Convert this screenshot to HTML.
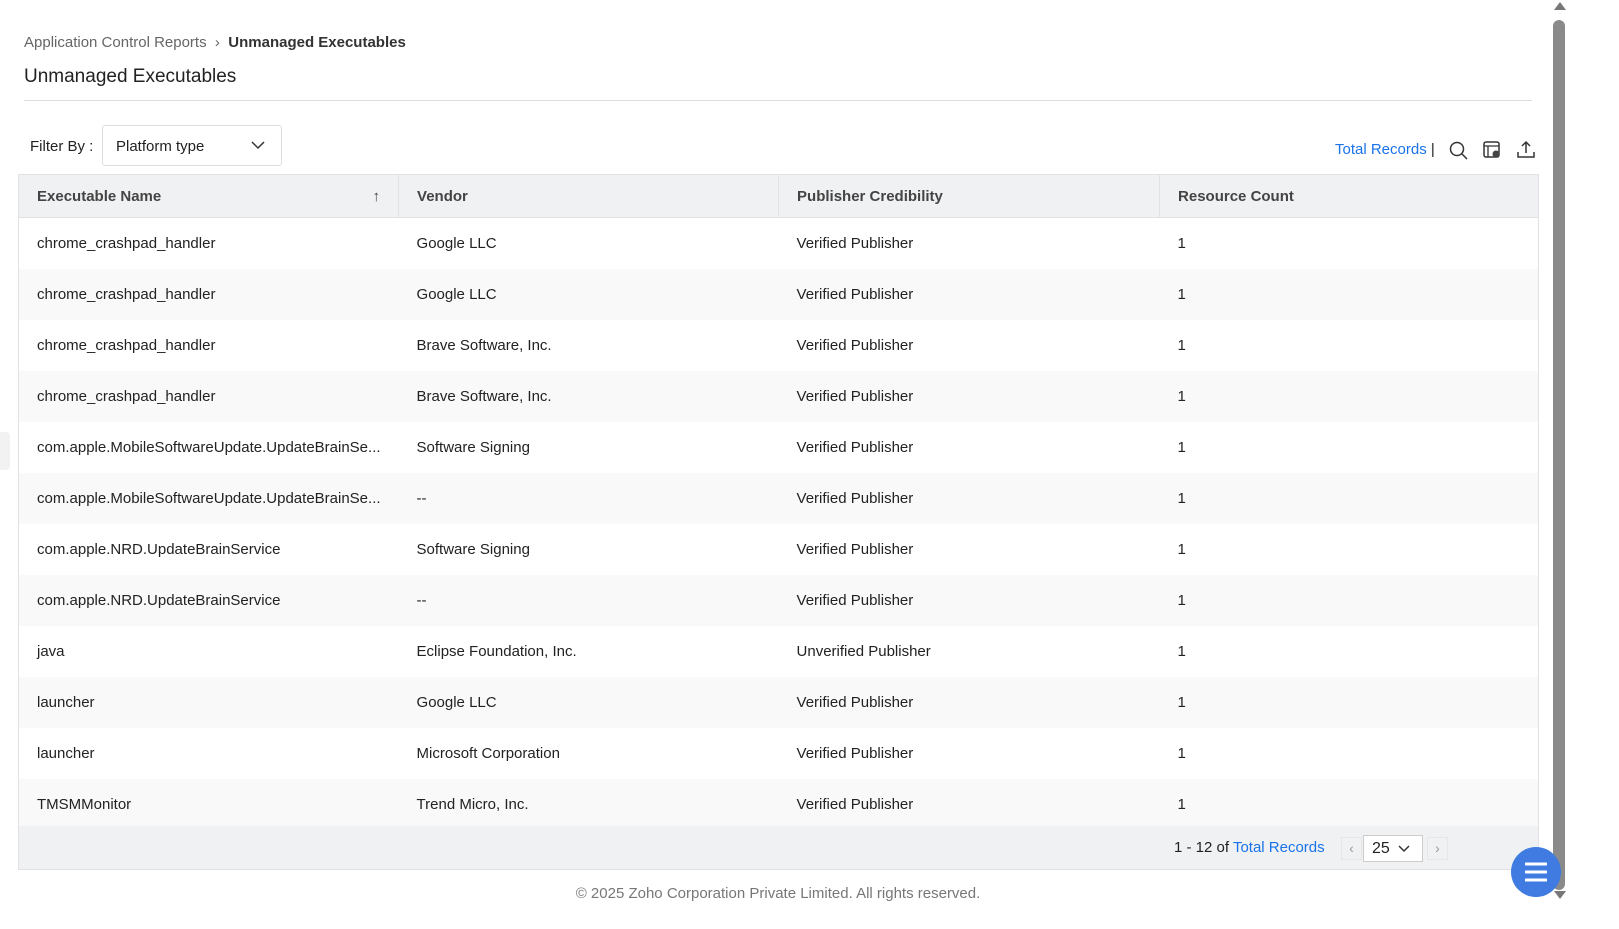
<!DOCTYPE html><html><head><style>
body{margin:0;width:1619px;height:929px;overflow:hidden;background:#fff;font-family:"Liberation Sans",sans-serif;color:#222;position:relative}
.a{position:absolute}
.bc{left:24px;top:34px;font-size:15px;color:#666}
.bc b{color:#333}
h1{position:absolute;left:24px;top:66px;margin:0;font-size:19px;font-weight:normal;color:#222}
.hr{left:24px;top:100px;width:1508px;border-top:1px solid #ddd}
table{position:absolute;left:18px;top:174px;width:1521px;border-collapse:collapse;font-size:15px;border:1px solid #e2e2e6}
th{background:#f0f1f3;height:42px;text-align:left;padding:0 18px;font-weight:bold;color:#444;border-right:1px solid #e2e2e6;border-bottom:1px solid #e2e2e6}
td{height:51px;padding:0 18px;color:#222}
tr:nth-child(odd) td{background:#f9f9fa}
.ft{left:18px;top:826px;width:1519px;height:43px;background:#f0f1f3;border:1px solid #e2e2e6;border-top:none}
</style></head><body>
<div class="a bc">Application Control Reports &nbsp;›&nbsp; <b>Unmanaged Executables</b></div>
<h1>Unmanaged Executables</h1>
<div class="a hr"></div>
<div class="a" style="left:30px;top:138px;font-size:15px">Filter By :</div>
<div class="a" style="left:102px;top:125px;width:180px;height:41px;border:1px solid #ddd;border-radius:3px;box-sizing:border-box;font-size:15px;padding:12px 13px">Platform type<svg class="a" style="left:148px;top:15px" width="14" height="9"><path d="M1 1l6 6 6-6" stroke="#333" fill="none" stroke-width="1.5"/></svg></div>
<div class="a" style="left:1335px;top:141px;font-size:15px;color:#1a73e8">Total Records <span style="color:#222">|</span></div>
<svg class="a" style="left:1449px;top:141px" width="20" height="20"><circle cx="8" cy="8" r="6.5" stroke="#333" fill="none" stroke-width="1.5"/><path d="M13 13l5 5" stroke="#333" stroke-width="1.5"/></svg>
<svg class="a" style="left:1483px;top:141px" width="20" height="18"><rect x="1" y="1" width="15" height="15" rx="2" stroke="#333" fill="none" stroke-width="1.5"/><path d="M1 5h15M5 5v11" stroke="#333" stroke-width="1.3"/><circle cx="13" cy="13" r="3.5" fill="#444"/></svg>
<svg class="a" style="left:1517px;top:140px" width="18" height="19"><path d="M9 13V2M5 6l4-4 4 4M1 12v5h16v-5" stroke="#333" fill="none" stroke-width="1.5"/></svg>
<table>
<tr><th style="width:343px">Executable Name<span style="float:right;font-weight:normal">↑</span></th><th style="width:343px">Vendor</th><th style="width:344px">Publisher Credibility</th><th style="border-right:none">Resource Count</th></tr>
<tr><td>chrome_crashpad_handler</td><td>Google LLC</td><td>Verified Publisher</td><td>1</td></tr>
<tr><td>chrome_crashpad_handler</td><td>Google LLC</td><td>Verified Publisher</td><td>1</td></tr>
<tr><td>chrome_crashpad_handler</td><td>Brave Software, Inc.</td><td>Verified Publisher</td><td>1</td></tr>
<tr><td>chrome_crashpad_handler</td><td>Brave Software, Inc.</td><td>Verified Publisher</td><td>1</td></tr>
<tr><td>com.apple.MobileSoftwareUpdate.UpdateBrainSe...</td><td>Software Signing</td><td>Verified Publisher</td><td>1</td></tr>
<tr><td>com.apple.MobileSoftwareUpdate.UpdateBrainSe...</td><td>--</td><td>Verified Publisher</td><td>1</td></tr>
<tr><td>com.apple.NRD.UpdateBrainService</td><td>Software Signing</td><td>Verified Publisher</td><td>1</td></tr>
<tr><td>com.apple.NRD.UpdateBrainService</td><td>--</td><td>Verified Publisher</td><td>1</td></tr>
<tr><td>java</td><td>Eclipse Foundation, Inc.</td><td>Unverified Publisher</td><td>1</td></tr>
<tr><td>launcher</td><td>Google LLC</td><td>Verified Publisher</td><td>1</td></tr>
<tr><td>launcher</td><td>Microsoft Corporation</td><td>Verified Publisher</td><td>1</td></tr>
<tr><td>TMSMMonitor</td><td>Trend Micro, Inc.</td><td>Verified Publisher</td><td>1</td></tr>
</table>
<div class="a ft"></div>
<div class="a" style="left:1174px;top:839px;font-size:15px">1 - 12 of <span style="color:#1a73e8">Total Records</span></div>
<div class="a" style="left:1341px;top:837px;width:19px;height:21px;border:1px solid #e6e6e6;color:#999;font-size:14px;text-align:center;line-height:20px">‹</div>
<div class="a" style="left:1363px;top:835px;width:60px;height:27px;background:#fff;border:1px solid #ccc;box-sizing:border-box;font-size:16px;padding:4px 8px">25<svg class="a" style="left:34px;top:9px" width="12" height="8"><path d="M1 1l5 5 5-5" stroke="#333" fill="none" stroke-width="1.5"/></svg></div>
<div class="a" style="left:1427px;top:837px;width:19px;height:21px;border:1px solid #e6e6e6;color:#999;font-size:14px;text-align:center;line-height:20px">›</div>
<div class="a" style="left:0;top:885px;width:1556px;text-align:center;font-size:15px;color:#777">© 2025 Zoho Corporation Private Limited. All rights reserved.</div>
<div class="a" style="left:0;top:432px;width:10px;height:38px;background:#f2f2f2;border-radius:0 4px 4px 0"></div>
<div class="a" style="left:1553px;top:20px;width:12px;height:870px;background:#8a8a8a;border-radius:6px"></div>
<div class="a" style="left:1554px;top:2px;width:0;height:0;border:6px solid transparent;border-bottom:8px solid #777;border-top:none"></div>
<div class="a" style="left:1554px;top:891px;width:0;height:0;border:6px solid transparent;border-top:8px solid #777;border-bottom:none"></div>
<div class="a" style="left:1511px;top:847px;width:50px;height:50px;border-radius:50%;background:#3f7be0"><svg class="a" style="left:14px;top:15px" width="22" height="20"><path d="M1 2h20M1 10h20M1 18h20" stroke="#fff" stroke-width="3" stroke-linecap="round"/></svg></div>
</body></html>
